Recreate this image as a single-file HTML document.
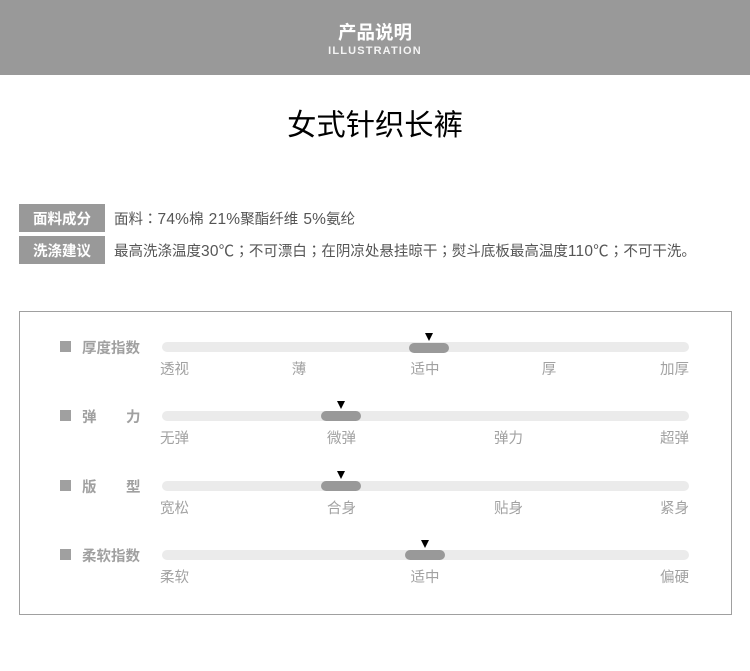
<!DOCTYPE html>
<html><head><meta charset="utf-8">
<style>
html,body{margin:0;padding:0;background:#fff}
#p{position:relative;width:750px;height:671px;overflow:hidden;font-family:"Liberation Sans","WenQuanYi Zen Hei","Noto Sans CJK SC",sans-serif;background:#fff}
#p div{position:absolute;white-space:nowrap}
.t{line-height:22px;font-size:14.5px;color:#a2a2a2}
.c{width:60px;text-align:center}
.l{left:82px;width:58.5px;font-size:14.5px;font-weight:bold;color:#a0a0a0;line-height:20px}
.sq{left:60px;width:11px;height:11px;background:#a0a0a0}
.tr{left:162px;width:527px;height:10px;background:#ebebeb;border-radius:5px}
.th{width:40px;height:10px;background:#999;border-radius:5px}
.ar{width:0;height:0;border-left:4px solid transparent;border-right:4px solid transparent;border-top:8px solid #000}
.tag{left:19px;width:86px;height:28px;background:#999;color:#fff;font-weight:bold;font-size:14.5px;line-height:32px;text-align:center}
.d{left:114px;font-size:14.5px;color:#555;line-height:22px;word-spacing:1px}
.n{font-size:15.5px;letter-spacing:.2px}
.h{font-family:"Noto Sans CJK TC",sans-serif;display:inline-block;width:14.5px;font-size:14.5px}
</style></head><body>
<div id="p">
<div style="left:0;top:0;width:750px;height:75px;background:#999"></div>
<div style="left:0;top:20px;width:750px;text-align:center;color:#fff;font-size:18.5px;font-weight:bold;line-height:25px">产品说明</div>
<div style="left:0;top:44px;width:750px;text-align:center;color:#f4f4f4;font-size:11px;font-weight:bold;letter-spacing:1.15px;line-height:15px">ILLUSTRATION</div>
<div style="left:0;top:106px;width:750px;text-align:center;color:#000;font-size:29.3px;line-height:40px">女式针织长裤</div>

<div class="tag" style="top:204px">面料成分</div>
<div class="d" style="top:208px">面料<span class="h">：</span><span class="n">74%</span>棉 <span class="n">21%</span>聚酯纤维 <span class="n">5%</span>氨纶</div>
<div class="tag" style="top:236px">洗涤建议</div>
<div class="d" style="top:240px">最高洗涤温度<span class="n">30℃</span><span class="h">；</span>不可漂白<span class="h">；</span>在阴凉处悬挂晾干<span class="h">；</span>熨斗底板最高温度<span class="n">110℃</span><span class="h">；</span>不可干洗。</div>

<div style="left:19px;top:311px;width:711px;height:302px;border:1px solid #a0a0a0"></div>

<div class="sq" style="top:341px"></div>
<div class="l" style="top:339px">厚度指数</div>
<div class="tr" style="top:342px"></div>
<div class="th" style="left:409px;top:343px"></div>
<div class="ar" style="left:425px;top:333px"></div>
<div class="t" style="left:160px;top:359px">透视</div>
<div class="t c" style="left:269px;top:359px">薄</div>
<div class="t c" style="left:395px;top:359px">适中</div>
<div class="t c" style="left:519px;top:359px">厚</div>
<div class="t" style="left:660px;top:359px">加厚</div>

<div class="sq" style="top:410px"></div>
<div class="l" style="top:408px"><span style="position:absolute;left:0">弹</span><span style="position:absolute;right:0">力</span></div>
<div class="tr" style="top:411px"></div>
<div class="th" style="left:321px;top:411px"></div>
<div class="ar" style="left:337px;top:401px"></div>
<div class="t" style="left:160px;top:428px">无弹</div>
<div class="t" style="left:327px;top:428px">微弹</div>
<div class="t" style="left:494px;top:428px">弹力</div>
<div class="t" style="left:660px;top:428px">超弹</div>

<div class="sq" style="top:480px"></div>
<div class="l" style="top:478px"><span style="position:absolute;left:0">版</span><span style="position:absolute;right:0">型</span></div>
<div class="tr" style="top:481px"></div>
<div class="th" style="left:321px;top:481px"></div>
<div class="ar" style="left:337px;top:471px"></div>
<div class="t" style="left:160px;top:498px">宽松</div>
<div class="t" style="left:327px;top:498px">合身</div>
<div class="t" style="left:494px;top:498px">贴身</div>
<div class="t" style="left:660px;top:498px">紧身</div>

<div class="sq" style="top:549px"></div>
<div class="l" style="top:547px">柔软指数</div>
<div class="tr" style="top:550px"></div>
<div class="th" style="left:405px;top:550px"></div>
<div class="ar" style="left:421px;top:540px"></div>
<div class="t" style="left:160px;top:567px">柔软</div>
<div class="t c" style="left:395px;top:567px">适中</div>
<div class="t" style="left:660px;top:567px">偏硬</div>
</div>
</body></html>
